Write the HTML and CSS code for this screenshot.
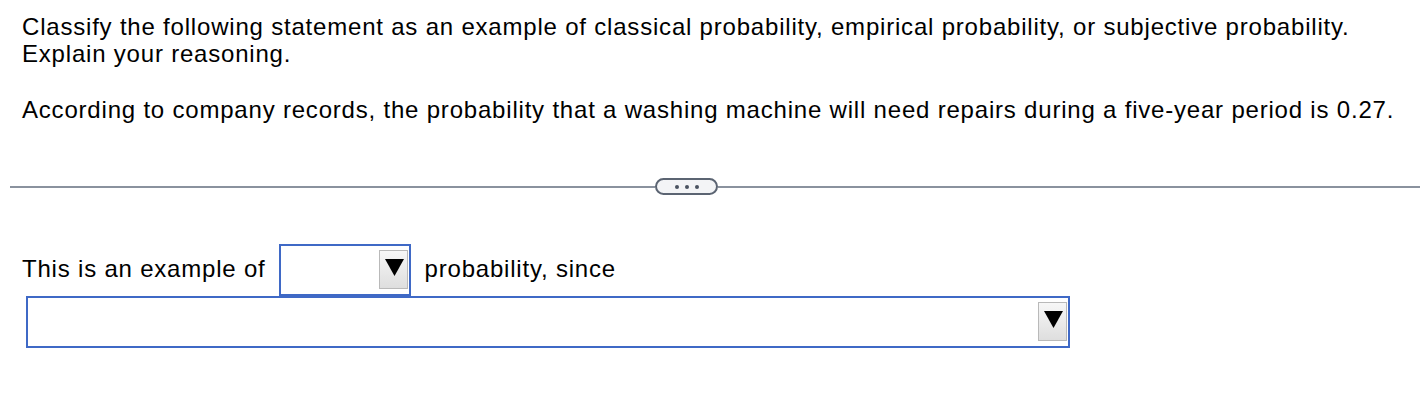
FILE: index.html
```html
<!DOCTYPE html>
<html>
<head>
<meta charset="utf-8">
<link rel="stylesheet" href="styles.css">
</head>
<body>
<div class="question">
  <p class="stem">Classify the following statement as an example of classical probability, empirical probability, or subjective probability.<br>Explain your reasoning.</p>
  <p class="statement">According to company records, the probability that a washing machine will need repairs during a five-year period is 0.27.</p>
</div>
<div class="divider">
  <span class="line left"></span>
  <span class="pill"><i class="dot"></i><i class="dot"></i><i class="dot"></i></span>
  <span class="line right"></span>
</div>
<div class="answer">
  <div class="row">
    <span class="label">This is an example of</span>
    <span class="select short"><span class="btn"><svg width="19" height="17" viewBox="0 0 19 17"><polygon points="0,0 19,0 9.5,17" fill="#000"/></svg></span></span>
    <span class="label after">probability, since</span>
  </div>
  <div class="select long"><span class="btn"><svg width="19" height="17" viewBox="0 0 19 17"><polygon points="0,0 19,0 9.5,17" fill="#000"/></svg></span></div>
</div>
</body>
</html>
```

FILE: styles.css
```css
html, body {
  margin: 0;
  padding: 0;
  background: #ffffff;
}
body {
  font-family: "Liberation Sans", Arial, Helvetica, sans-serif;
  font-size: 24px;
  letter-spacing: 0.8px;
  color: #000;
}
.question {
  padding: 13px 22px 0 22px;
}
.stem {
  margin: 0;
  line-height: 27px;
}
.statement {
  margin: 29px 0 0 0;
  line-height: 27px;
}
.divider {
  display: flex;
  align-items: center;
  margin: 55px 2px 0 10px;
  height: 17px;
}
.line {
  height: 2px;
  background: #8a929e;
}
.line.left {
  flex: 0 0 645px;
}
.line.right {
  flex: 1;
}
.pill {
  box-sizing: border-box;
  display: flex;
  align-items: center;
  justify-content: center;
  gap: 6px;
  width: 63px;
  height: 17px;
  border: 2px solid #5b6472;
  border-radius: 9px;
  background: #f3f4f6;
}
.dot {
  width: 4px;
  height: 4px;
  border-radius: 50%;
  background: #4a5260;
}
.answer {
  padding: 49px 0 0 26px;
}
.row {
  display: flex;
  align-items: center;
  margin-left: -4px;
}
.label {
  line-height: 27px;
  margin-right: 13px;
  margin-bottom: 3px;
}
.label.after {
  margin-left: 14px;
  margin-right: 0;
}
.select {
  box-sizing: border-box;
  display: flex;
  align-items: center;
  justify-content: flex-end;
  height: 52px;
  border: 2px solid #3f69c6;
  background: #fff;
  padding-right: 1px;
  padding-bottom: 1px;
}
.select.short {
  width: 132px;
}
.select.long {
  width: 1044px;
}
.btn {
  box-sizing: border-box;
  display: flex;
  align-items: flex-start;
  justify-content: center;
  width: 29px;
  height: 39px;
  padding-top: 8px;
  padding-left: 2px;
  border: 1px solid #b9b9b9;
  background: linear-gradient(#f7f7f7, #dedede);
}
.btn svg {
  display: block;
}
```
